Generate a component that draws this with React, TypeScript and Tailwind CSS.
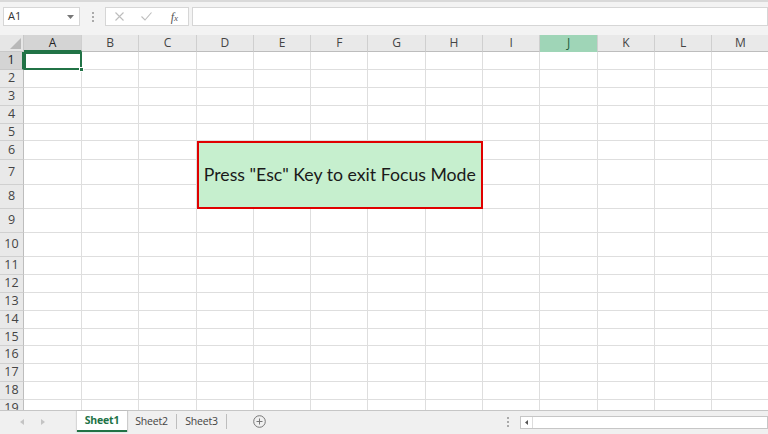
import React from 'react';

const COLS = ['A', 'B', 'C', 'D', 'E', 'F', 'G', 'H', 'I', 'J', 'K', 'L', 'M'];
const ROW_HEIGHTS = [18, 18, 18, 17.5, 17.5, 19, 24.5, 24.5, 24, 24, 18, 18, 18, 17.5, 17.5, 18, 18, 18, 18];

const uiFont = { fontFamily: '"Open Sans", "Noto Sans", sans-serif' };

/**
 * Formula bar with name box, cancel/enter buttons and fx
 */
const FormulaBar: React.FC = () => (
  <div className="h-[35px] shrink-0 bg-[#f3f3f3] border-t-2 border-[#d9d9d9] flex items-start pt-[5px]">
    <div className="ml-[3px] w-[77px] h-[19px] bg-white border border-[#d6d6d6] flex items-center justify-between pl-[4px] pr-[5px]">
      <span className="text-[11px] text-[#333]" style={uiFont}>A1</span>
      <svg width="7" height="4" viewBox="0 0 7 4">
        <path d="M0 0 L7 0 L3.5 4 Z" fill="#777" />
      </svg>
    </div>
    <div className="w-[25px] h-[19px] flex flex-col items-center justify-center gap-[2px]">
      <span className="w-[2px] h-[2px] bg-[#aaa]" />
      <span className="w-[2px] h-[2px] bg-[#aaa]" />
      <span className="w-[2px] h-[2px] bg-[#aaa]" />
    </div>
    <div className="w-[84px] h-[19px] bg-white border border-[#d6d6d6] flex items-center">
      <div className="w-[28px] flex justify-center">
        <svg width="9" height="9" viewBox="0 0 9 9">
          <path d="M0.5 0.5 L8.5 8.5 M8.5 0.5 L0.5 8.5" stroke="#bdbdbd" strokeWidth="1.1" />
        </svg>
      </div>
      <div className="w-[28px] flex justify-center">
        <svg width="11" height="9" viewBox="0 0 11 9">
          <path d="M0.5 4.5 L4 8 L10.5 0.5" stroke="#bdbdbd" strokeWidth="1.1" fill="none" />
        </svg>
      </div>
      <div className="w-[28px] flex justify-center">
        <span className="text-[12px] italic text-[#555] leading-none" style={{ fontFamily: '"Liberation Serif", serif' }}>
          f<span className="text-[9px]">x</span>
        </span>
      </div>
    </div>
    <div className="ml-[3px] flex-1 h-[19px] bg-white border border-[#d6d6d6]" />
  </div>
);

/**
 * Worksheet grid: headers, cells, merged note cell
 */
const SheetGrid: React.FC = () => {
  const rowTemplate = `17px ${ROW_HEIGHTS.map(h => `${h}px`).join(' ')}`;
  const cells: React.ReactNode[] = [];

  // corner
  cells.push(
    <div key="corner" className="bg-[#e6e6e6] border-r border-b border-[#c8c8c8] flex items-end justify-end p-[2px]">
      <svg width="11" height="11" viewBox="0 0 11 11">
        <path d="M11 0 L11 11 L0 11 Z" fill="#b8b8b8" />
      </svg>
    </div>
  );

  COLS.forEach(c => {
    let cls = 'bg-[#e9e9e9] text-[#444] border-r border-[#cfcfcf] border-b border-b-[#bdbdbd]';
    if (c === 'A') cls = 'bg-[#d4d4d4] text-[#222] border-r border-[#cfcfcf] border-b-2 border-b-[#217346]';
    if (c === 'J') cls = 'bg-[#9fd5b7] text-[#1e5c3a] border-r border-[#cfcfcf] border-b border-b-[#9fd5b7]';
    cells.push(
      <div key={`h-${c}`} className={`${cls} flex items-center justify-center text-[12px] leading-none`} style={uiFont}>
        {c}
      </div>
    );
  });

  ROW_HEIGHTS.forEach((_, i) => {
    const r = i + 1;
    const headCls =
      r === 1
        ? 'bg-[#d4d4d4] text-[#222] border-r-2 border-r-[#217346] border-b border-b-[#c8c8c8]'
        : 'bg-[#e9e9e9] text-[#444] border-r border-r-[#bdbdbd] border-b border-b-[#d0d0d0]';
    cells.push(
      <div key={`r-${r}`} className={`${headCls} flex items-center justify-center text-[12.5px] leading-none`} style={uiFont}>
        {r}
      </div>
    );
    COLS.forEach(c => {
      const merged = r >= 6 && r <= 8 && ['D', 'E', 'F', 'G', 'H'].includes(c);
      if (merged) return;
      if (r === 1 && c === 'A') {
        cells.push(
          <div key={`${c}${r}`} className="relative border-2 border-[#217346] bg-white">
            <span className="absolute -right-[4px] -bottom-[4px] w-[5px] h-[5px] bg-[#217346] border border-white" />
          </div>
        );
        return;
      }
      cells.push(<div key={`${c}${r}`} className="bg-white border-r border-b border-[#dedede]" />);
    });
  });

  return (
    <div className="flex-1 min-h-0 overflow-hidden bg-white">
      <div
        className="grid grid-cols-[24px_58px_repeat(12,57.3px)] w-[770px]"
        style={{ gridTemplateRows: rowTemplate }}
      >
        <div className="col-start-5 col-span-5 row-start-7 row-span-3 bg-[#c6efce] border-2 border-[#e00000] flex items-center justify-center">
          <span className="text-[17.7px] text-[#1a1a1a] leading-none" style={{ fontFamily: 'Lato, "Liberation Sans", sans-serif' }}>
            Press "Esc" Key to exit Focus Mode
          </span>
        </div>
        {cells}
      </div>
    </div>
  );
};

/**
 * Sheet tabs and horizontal scrollbar
 */
const TabBar: React.FC = () => (
  <div className="h-[24px] shrink-0 bg-[#f0f0f0] border-t border-[#c6c6c6] flex items-start" style={uiFont}>
    <div className="w-[77px] h-[21px] flex items-center">
      <svg className="ml-[20px]" width="4" height="6" viewBox="0 0 4 6">
        <path d="M4 0 L4 6 L0 3 Z" fill="#c4c4c4" />
      </svg>
      <svg className="ml-[17px]" width="4" height="6" viewBox="0 0 4 6">
        <path d="M0 0 L0 6 L4 3 Z" fill="#c4c4c4" />
      </svg>
    </div>
    <div className="w-[50px] h-[21px] bg-white border-b-2 border-[#217346] flex items-center justify-center shadow-[1px_0_1px_rgba(0,0,0,0.15),-1px_0_1px_rgba(0,0,0,0.1)]">
      <span className="text-[10.5px] tracking-[-0.2px] font-bold text-[#217346]">Sheet1</span>
    </div>
    <div className="w-[49px] h-[21px] flex items-center justify-center">
      <span className="text-[10.5px] tracking-[-0.2px] text-[#444]">Sheet2</span>
    </div>
    <div className="w-[1px] h-[15px] mt-[3px] bg-[#bdbdbd]" />
    <div className="w-[49px] h-[21px] flex items-center justify-center">
      <span className="text-[10.5px] tracking-[-0.2px] text-[#444]">Sheet3</span>
    </div>
    <div className="w-[1px] h-[15px] mt-[3px] bg-[#bdbdbd]" />
    <div className="w-[64px] h-[21px] flex items-center justify-center">
      <svg width="13" height="13" viewBox="0 0 13 13">
        <circle cx="6.5" cy="6.5" r="5.8" stroke="#777" strokeWidth="1" fill="none" />
        <path d="M6.5 3.5 V9.5 M3.5 6.5 H9.5" stroke="#777" strokeWidth="1" />
      </svg>
    </div>
    <div className="flex-1" />
    <div className="w-[24px] h-[21px] flex flex-col items-center justify-center gap-[2px]">
      <span className="w-[2px] h-[2px] bg-[#aaa]" />
      <span className="w-[2px] h-[2px] bg-[#aaa]" />
      <span className="w-[2px] h-[2px] bg-[#aaa]" />
    </div>
    <div className="w-[248px] h-[13px] mt-[5px] bg-white border border-[#c6c6c6] flex items-center">
      <div className="w-[12px] h-full border-r border-[#dcdcdc] flex items-center justify-center">
        <svg width="3" height="5" viewBox="0 0 3 5">
          <path d="M3 0 L3 5 L0 2.5 Z" fill="#555" />
        </svg>
      </div>
    </div>
  </div>
);

export default function App() {
  return (
    <div className="w-[768px] h-[434px] overflow-hidden flex flex-col bg-[#f3f3f3]">
      <FormulaBar />
      <SheetGrid />
      <TabBar />
    </div>
  );
}
